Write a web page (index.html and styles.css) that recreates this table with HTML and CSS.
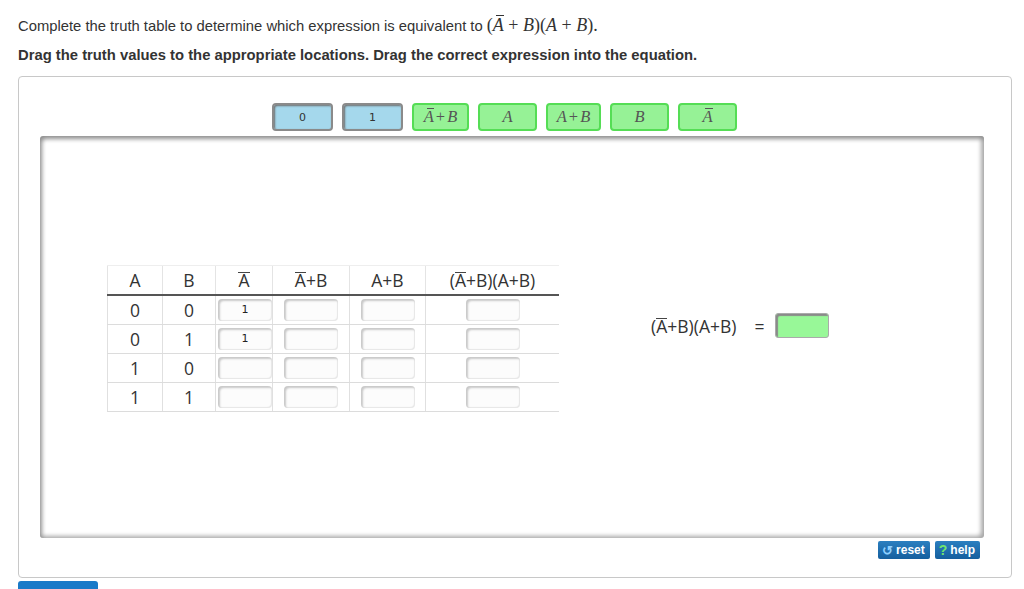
FILE: index.html
```html
<!DOCTYPE html>
<html>
<head>
<meta charset="utf-8">
<link rel="stylesheet" href="styles.css">
</head>
<body>
<p class="intro">Complete the truth table to determine which expression is equivalent to <span class="math">(<i class="ov">A</i><span class="op">+</span><i>B</i>)(<i>A</i><span class="op">+</span><i>B</i>).</span></p>
<p class="instr">Drag the truth values to the appropriate locations. Drag the correct expression into the equation.</p>
<div class="panel">
  <div class="tokens">
    <div class="tok val w61">0</div>
    <div class="tok val w61">1</div>
    <div class="tok expr w57"><i class="ov">A</i><span class="op">+</span><i>B</i></div>
    <div class="tok expr w59"><i>A</i></div>
    <div class="tok expr w55"><i>A</i><span class="op">+</span><i>B</i></div>
    <div class="tok expr w59"><i>B</i></div>
    <div class="tok expr w59"><i class="ov">A</i></div>
  </div>
  <div class="canvas">
    <table class="tt">
      <thead>
        <tr><th class="c1">A</th><th class="c2">B</th><th class="c3"><span class="bar">A</span></th><th class="c4"><span class="bar">A</span>+B</th><th class="c5">A+B</th><th class="c6">(<span class="bar">A</span>+B)(A+B)</th></tr>
      </thead>
      <tbody>
        <tr><td>0</td><td>0</td><td><div class="slot left filled">1</div></td><td><div class="slot"></div></td><td><div class="slot"></div></td><td><div class="slot"></div></td></tr>
        <tr><td>0</td><td>1</td><td><div class="slot left filled">1</div></td><td><div class="slot"></div></td><td><div class="slot"></div></td><td><div class="slot"></div></td></tr>
        <tr><td>1</td><td>0</td><td><div class="slot left"></div></td><td><div class="slot"></div></td><td><div class="slot"></div></td><td><div class="slot"></div></td></tr>
        <tr><td>1</td><td>1</td><td><div class="slot left"></div></td><td><div class="slot"></div></td><td><div class="slot"></div></td><td><div class="slot"></div></td></tr>
      </tbody>
    </table>
    <div class="equation">
      <span class="eqtext">(<span class="bar">A</span>+B)(A+B)</span>
      <span class="eq">=</span>
      <div class="drop"></div>
    </div>
  </div>
  <div class="controls">
    <span class="btn"><span class="ico-reset">&#8634;</span> reset</span>
    <span class="btn"><span class="ico-help">?</span> help</span>
  </div>
</div>
<div class="submit"></div>
</body>
</html>
```
FILE: styles.css
```css
html, body {
  margin: 0;
  padding: 0;
  background: #fff;
}
body {
  font-family: "Liberation Sans", Arial, sans-serif;
  color: #333;
  padding-left: 18px;
  width: 994px;
  overflow: hidden;
  height: 589px;
}
.intro {
  margin: 0;
  padding-top: 15px;
  font-size: 14.8px;
  line-height: 20px;
  height: 20px;
  white-space: nowrap;
}
.math {
  font-family: "Liberation Serif", "Times New Roman", serif;
  font-size: 18px;
}
.math i, .tok i {
  font-style: italic;
}
.op {
  margin: 0 4.5px;
}
.ov {
  position: relative;
}
.ov::after {
  content: "";
  position: absolute;
  left: 3px;
  right: 0;
  top: 0px;
  border-top: 1px solid currentColor;
}
.instr {
  margin: 0;
  padding-top: 10px;
  font-size: 14.8px;
  font-weight: bold;
  line-height: 20px;
  height: 20px;
  white-space: nowrap;
}
.panel {
  margin-top: 11px;
  border: 1px solid #c8c8c8;
  border-radius: 4px;
  box-sizing: border-box;
  height: 502px;
  padding: 26px 27px 0 21px;
}
.tokens {
  display: flex;
  gap: 9px;
  padding-left: 232px;
  height: 28px;
}
.tok {
  box-sizing: border-box;
  height: 28px;
  border-radius: 4px;
  display: flex;
  align-items: center;
  justify-content: center;
}
.val {
  background: #a5d8ec;
  border: 2px solid #8a8a8a;
  box-shadow: inset 1px 1px 2px #6d6d6d;
  font-family: "DejaVu Sans", Verdana, sans-serif;
  font-size: 11px;
  color: #333;
}
.expr {
  background: #96f296;
  border: 2px solid #55dd55;
  font-family: "Liberation Serif", serif;
  font-size: 16.5px;
  color: #555;
}
.expr .op { margin: 0 2px; }
.expr .ov::after { left: 3px; top: 1px; }
.w61 { width: 61px; }
.w57 { width: 57px; }
.w59 { width: 59px; }
.w55 { width: 55px; }
.canvas {
  margin-top: 5px;
  height: 402px;
  box-sizing: border-box;
  border-radius: 3px;
  box-shadow: inset 3px 4px 4px -1px #8f8f8f, inset -4px -3px 4px -1px #a8a8a8;
  display: flex;
  align-items: flex-start;
  padding: 129px 0 0 67px;
}
.tt {
  border-collapse: collapse;
  font-family: "Open Sans", "Liberation Sans", sans-serif;
  font-size: 17.5px;
  color: #333;
}
.tt th {
  font-weight: normal;
  height: 28px;
  padding: 0;
  line-height: 20px;
  border-left: 1px solid #e4e4e4;
  border-bottom: 2px solid #555;
  border-top: 1px solid #eee;
}
.tt td {
  height: 28px;
  padding: 0;
  line-height: 20px;
  text-align: center;
  border-left: 1px solid #e0e0e0;
  border-bottom: 1px solid #dcdcdc;
}
.c1 { width: 54px; }
.c2 { width: 52px; }
.c3 { width: 54px; }
.c4 { width: 76px; }
.c5 { width: 75px; }
.c6 { width: 133px; }
.bar {
  display: inline-block;
  border-top: 1.5px solid #444;
  line-height: 15px;
}
.slot {
  width: 54px;
  height: 22px;
  margin: 0 auto;
  box-sizing: border-box;
  border-radius: 4px;
  background: #fcfcfc;
  box-shadow: inset 2px 2px 2px #c9c9c9, inset -1px -1px 1px #e6e6e6;
  font-family: "DejaVu Sans", Verdana, sans-serif;
  font-size: 11px;
  line-height: 22px;
  color: #222;
}
.slot.left {
  margin: 0 0 0 2px;
}
.equation {
  margin-left: 92px;
  margin-top: 48px;
  display: flex;
  align-items: center;
  font-family: "Open Sans", "Liberation Sans", sans-serif;
  font-size: 17.5px;
  color: #333;
}
.eq {
  margin: 0 11px 0 18px;
}
.drop {
  width: 54px;
  height: 25px;
  box-sizing: border-box;
  border-radius: 3px;
  background: #98f898;
  border: 1px solid #aaa;
  box-shadow: inset 2px 2px 1px #8a8a8a;
}
.controls {
  display: flex;
  justify-content: flex-end;
  gap: 5px;
  margin-top: 3px;
  padding-right: 4px;
}
.btn {
  display: inline-flex;
  align-items: center;
  height: 18px;
  padding: 0 5px 0 4px;
  background: linear-gradient(#2b7fc0, #155f9e);
  border-radius: 2px;
  color: #fff;
  font-weight: bold;
  font-size: 12px;
  font-family: "Liberation Sans", Arial, sans-serif;
}
.ico-reset {
  color: #8fd0ff;
  font-size: 13px;
  margin-right: 3px;
}
.ico-help {
  color: #6fe46f;
  font-size: 14px;
  margin-right: 3px;
}
.submit {
  margin-top: 3px;
  width: 80px;
  height: 10px;
  background: #1a7ac8;
  border-radius: 3px 3px 0 0;
}
```
